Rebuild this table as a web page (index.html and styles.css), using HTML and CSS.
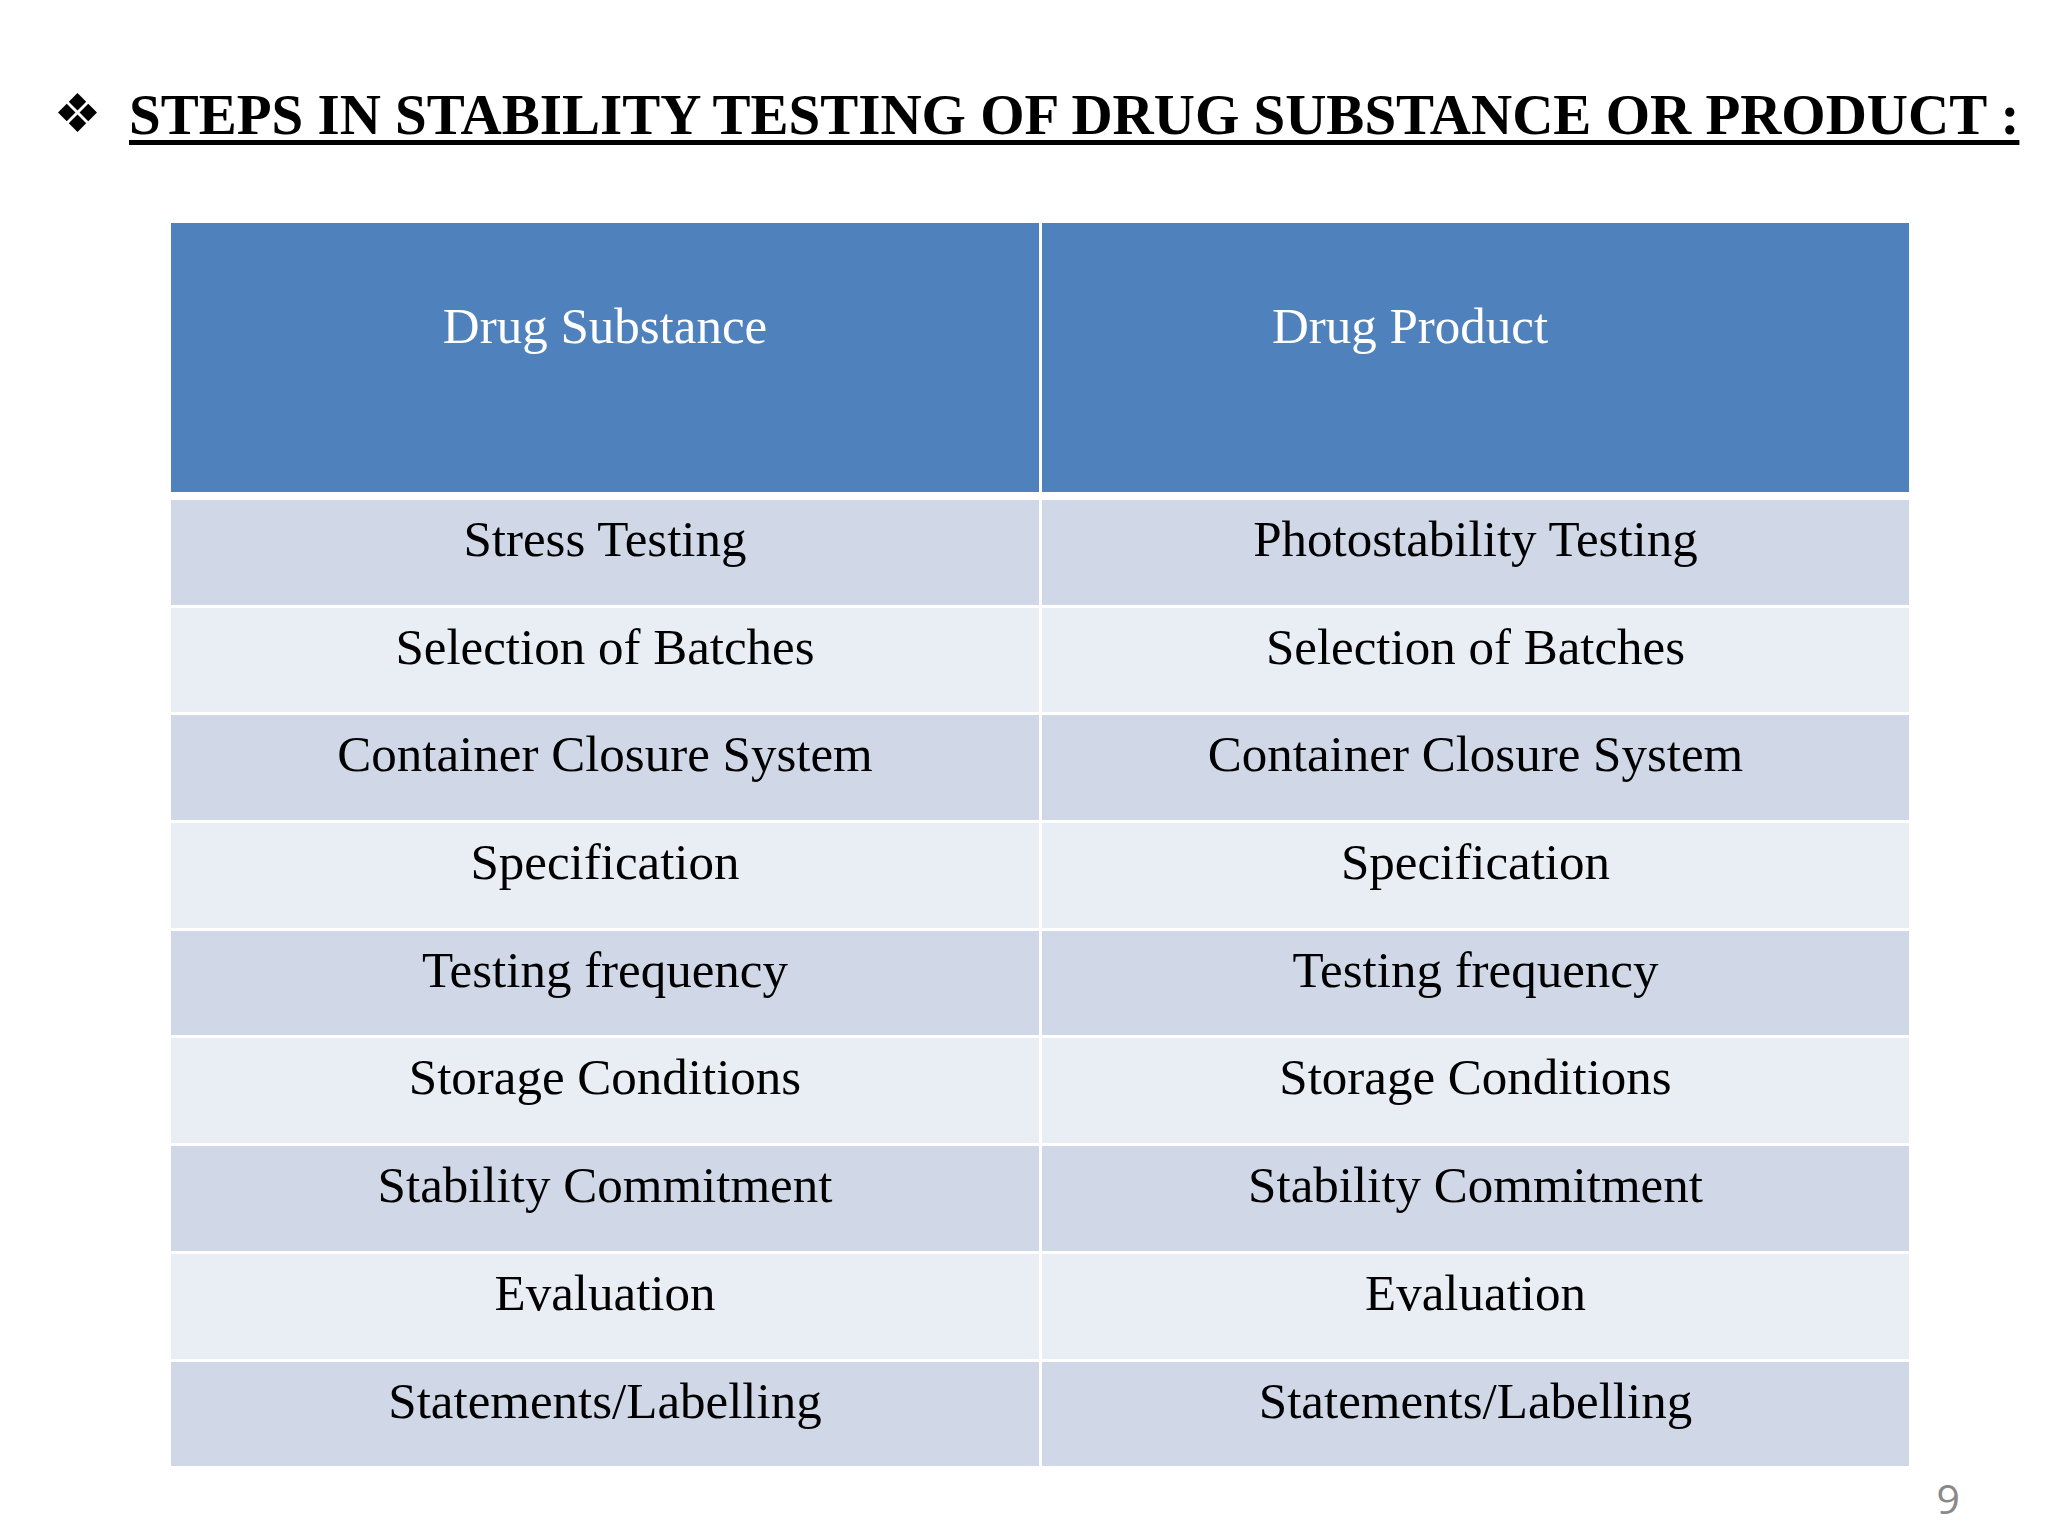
FILE: index.html
```html
<!DOCTYPE html>
<html lang="en">
<head>
<meta charset="utf-8">
<title>Steps in Stability Testing</title>
<link rel="stylesheet" href="styles.css">
</head>
<body>
<div class="slide">
  <div class="title-row">
    <svg class="bullet" viewBox="0 0 40 40" width="41" height="41" aria-hidden="true">
      <polygon points="20,1 28.5,9.5 20,18 11.5,9.5" />
      <polygon points="9.5,11.5 18,20 9.5,28.5 1,20" />
      <polygon points="30.5,11.5 39,20 30.5,28.5 22,20" />
      <polygon points="20,22 28.5,30.5 20,39 11.5,30.5" />
    </svg>
    <h1 class="title">STEPS IN STABILITY TESTING OF DRUG SUBSTANCE OR PRODUCT :</h1>
  </div>

  <div class="table">
    <div class="head">
      <div class="hcell">Drug Substance</div>
      <div class="hcell hcell-right">Drug Product</div>
    </div>
    <div class="body">
      <div class="row odd"><div class="cell">Stress Testing</div><div class="cell">Photostability Testing</div></div>
      <div class="row even"><div class="cell">Selection of Batches</div><div class="cell">Selection of Batches</div></div>
      <div class="row odd"><div class="cell">Container Closure System</div><div class="cell">Container Closure System</div></div>
      <div class="row even"><div class="cell">Specification</div><div class="cell">Specification</div></div>
      <div class="row odd"><div class="cell">Testing frequency</div><div class="cell">Testing frequency</div></div>
      <div class="row even"><div class="cell">Storage Conditions</div><div class="cell">Storage Conditions</div></div>
      <div class="row odd"><div class="cell">Stability Commitment</div><div class="cell">Stability Commitment</div></div>
      <div class="row even"><div class="cell">Evaluation</div><div class="cell">Evaluation</div></div>
      <div class="row odd"><div class="cell">Statements/Labelling</div><div class="cell">Statements/Labelling</div></div>
    </div>
  </div>

  <div class="page-num">9</div>
</div>
</body>
</html>
```

FILE: styles.css
```css
html, body {
  margin: 0;
  padding: 0;
  background: #ffffff;
}

.slide {
  width: 2048px;
  height: 1536px;
  box-sizing: border-box;
  padding-top: 86px;
  font-family: "Liberation Serif", "Times New Roman", serif;
  color: #000000;
}

.title-row {
  display: flex;
  align-items: flex-start;
  padding-left: 57px;
}

.bullet {
  flex: none;
  margin-top: 6px;
  margin-right: 31px;
  fill: #000000;
}

.title {
  margin: 0;
  font-family: "Liberation Serif", "Times New Roman", serif;
  font-weight: bold;
  font-size: 57px;
  line-height: 57px;
  white-space: nowrap;
  text-decoration: underline;
  text-decoration-thickness: 5px;
  text-underline-offset: 6px;
}

.table {
  margin-top: 80px;
  margin-left: 171px;
  width: 1738px;
}

.head {
  display: grid;
  grid-template-columns: 868px 867px;
  column-gap: 3px;
  height: 269px;
}

.hcell {
  background: #4f81bd;
  color: #ffffff;
  font-size: 51px;
  line-height: 58px;
  text-align: center;
  padding-top: 74px;
  box-sizing: border-box;
}

.hcell-right {
  padding-right: 131px;
}

.body {
  margin-top: 8px;
  display: flex;
  flex-direction: column;
  gap: 3px;
}

.row {
  display: grid;
  grid-template-columns: 868px 867px;
  column-gap: 3px;
  height: 104.7px;
}

.cell {
  font-size: 51px;
  line-height: 58px;
  text-align: center;
  padding-top: 10px;
  box-sizing: border-box;
}

.odd .cell {
  background: #d0d8e8;
}

.even .cell {
  background: #e9edf4;
}

.page-num {
  margin-top: 8px;
  padding-right: 88px;
  text-align: right;
  font-family: "Open Sans", "Liberation Sans", sans-serif;
  font-size: 41px;
  line-height: 48px;
  color: #898989;
}
```
